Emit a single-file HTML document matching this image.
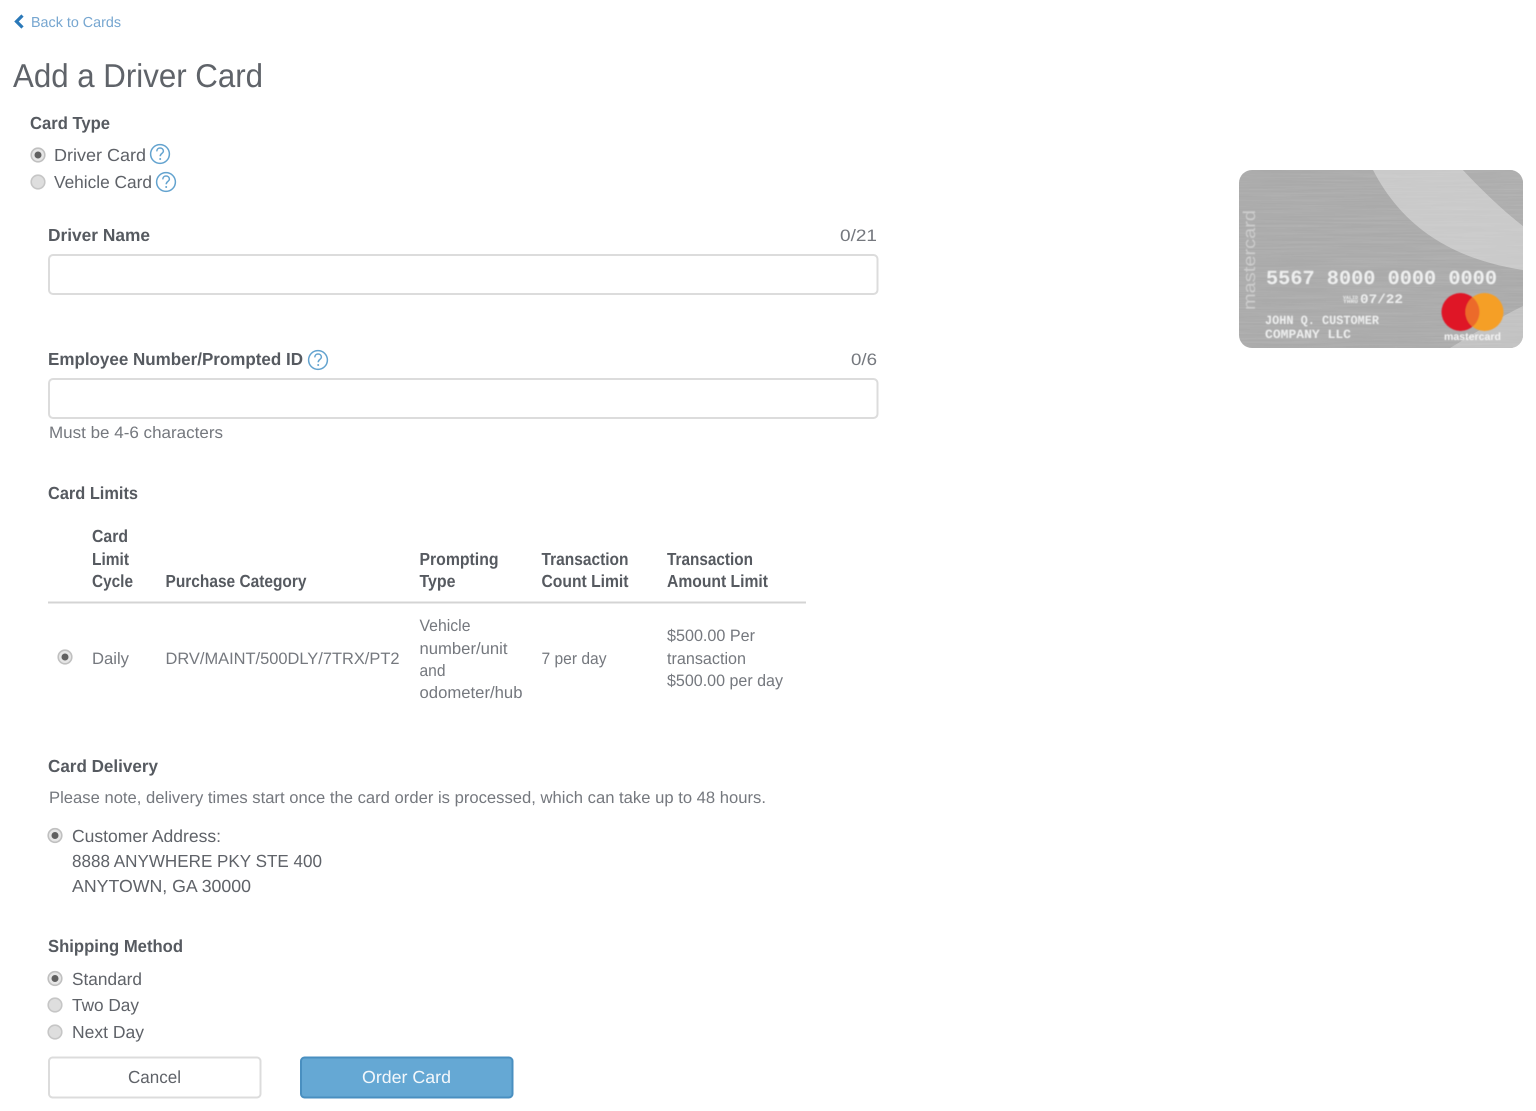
<!DOCTYPE html>
<html lang="en"><head><meta charset="utf-8"><title>Add a Driver Card</title>
<style>
html,body{margin:0;padding:0;background:#fff;width:1536px;height:1111px;overflow:hidden}
svg{display:block;position:absolute;left:0;top:0}
text{font-family:"Liberation Sans",sans-serif}
.b{font-weight:700;font-size:17.5px;fill:#565a60}
.r{font-size:17.5px;fill:#5e6268}
.l{font-size:16.5px;fill:#74787e}
.m{font-family:"Liberation Mono",monospace;font-weight:700;fill:#eeefef}
.box{fill:#fff;stroke:#dcdcdc;stroke-width:2}
</style></head><body>
<svg width="1536" height="1111" viewBox="0 0 1536 1111" xmlns="http://www.w3.org/2000/svg" text-rendering="geometricPrecision">
<defs>
<g id="on"><circle r="6.800" fill="#e6e6e6" stroke="#c0c0c0" stroke-width="1.600"/><circle r="3.500" fill="#606060"/></g>
<g id="off"><circle r="6.800" fill="#dedede" stroke="#c6c6c6" stroke-width="1.600"/></g>
<g id="q"><circle r="9.400" fill="#fff" stroke="#63a3cf" stroke-width="1.500"/><path d="M-3.200-2.600C-3.200-5 -1.500-6 0-6C2-6 3.400-4.700 3.400-2.900C3.400-.6 .2-.4 .2 2.200" fill="none" stroke="#63a3cf" stroke-width="1.500"/><circle cx=".2" cy="5" r="1" fill="#63a3cf"/></g>
<clipPath id="cc"><rect x="1239" y="170" width="284" height="178" rx="13"/></clipPath>
<filter id="brush" x="0" y="0" width="100%" height="100%"><feTurbulence type="fractalNoise" baseFrequency="0.012 0.55" numOctaves="3" seed="4"/><feColorMatrix values="0 0 0 0 1  0 0 0 0 1  0 0 0 0 1  .9 0 0 0 -.28"/></filter>
<filter id="soft" filterUnits="userSpaceOnUse" x="1230" y="160" width="306" height="200"><feGaussianBlur stdDeviation=".5"/></filter>
<filter id="page" filterUnits="userSpaceOnUse" x="0" y="0" width="1536" height="1111"><feGaussianBlur stdDeviation=".3"/></filter>
</defs>

<g filter="url(#page)">
<path d="M22.500 15.500L16.500 21.500L22.500 27.500" fill="none" stroke="#2a78b8" stroke-width="3.200"/>
<text x="31" y="27" font-size="14.500" fill="#76a6d0" textLength="90" lengthAdjust="spacingAndGlyphs">Back to Cards</text>
<text x="13" y="87" font-size="33" fill="#5f6369" textLength="250" lengthAdjust="spacingAndGlyphs">Add a Driver Card</text>

<text class="b" x="30" y="129" textLength="80" lengthAdjust="spacingAndGlyphs">Card Type</text>
<use href="#on" x="38" y="155"/>
<text class="r" x="54" y="161" textLength="92" lengthAdjust="spacingAndGlyphs">Driver Card</text>
<use href="#q" x="160" y="154"/>
<use href="#off" x="38" y="182"/>
<text class="r" x="54" y="188" textLength="98" lengthAdjust="spacingAndGlyphs">Vehicle Card</text>
<use href="#q" x="166" y="182"/>

<text class="b" x="48" y="241" textLength="102" lengthAdjust="spacingAndGlyphs">Driver Name</text>
<text class="l" x="840" y="241" textLength="37" lengthAdjust="spacingAndGlyphs">0/21</text>
<rect class="box" x="49" y="255" width="828.500" height="39" rx="4"/>

<text class="b" x="48" y="365" textLength="255" lengthAdjust="spacingAndGlyphs">Employee Number/Prompted ID</text>
<use href="#q" x="318" y="360"/>
<text class="l" x="851" y="365" textLength="26" lengthAdjust="spacingAndGlyphs">0/6</text>
<rect class="box" x="49" y="379" width="828.500" height="39" rx="4"/>
<text class="l" x="49" y="438" textLength="174" lengthAdjust="spacingAndGlyphs">Must be 4-6 characters</text>

<text class="b" x="48" y="499" textLength="90" lengthAdjust="spacingAndGlyphs">Card Limits</text>
<text class="b" x="92" y="542" textLength="36" lengthAdjust="spacingAndGlyphs">Card</text>
<text class="b" x="92" y="565" textLength="37" lengthAdjust="spacingAndGlyphs">Limit</text>
<text class="b" x="92" y="587" textLength="41" lengthAdjust="spacingAndGlyphs">Cycle</text>
<text class="b" x="165.500" y="587" textLength="141" lengthAdjust="spacingAndGlyphs">Purchase Category</text>
<text class="b" x="419.500" y="565" textLength="79" lengthAdjust="spacingAndGlyphs">Prompting</text>
<text class="b" x="419.500" y="587" textLength="36" lengthAdjust="spacingAndGlyphs">Type</text>
<text class="b" x="541.500" y="565" textLength="87" lengthAdjust="spacingAndGlyphs">Transaction</text>
<text class="b" x="541.500" y="587" textLength="87" lengthAdjust="spacingAndGlyphs">Count Limit</text>
<text class="b" x="667" y="565" textLength="86" lengthAdjust="spacingAndGlyphs">Transaction</text>
<text class="b" x="667" y="587" textLength="101" lengthAdjust="spacingAndGlyphs">Amount Limit</text>
<rect x="48" y="601.500" width="758" height="2" fill="#d4d4d4"/>

<use href="#on" x="65" y="657"/>
<text class="l" x="92" y="664" textLength="37" lengthAdjust="spacingAndGlyphs">Daily</text>
<text class="l" x="165.500" y="664" textLength="234" lengthAdjust="spacingAndGlyphs">DRV/MAINT/500DLY/7TRX/PT2</text>
<text class="l" x="419.500" y="631" textLength="51" lengthAdjust="spacingAndGlyphs">Vehicle</text>
<text class="l" x="419.500" y="654" textLength="88" lengthAdjust="spacingAndGlyphs">number/unit</text>
<text class="l" x="419.500" y="676" textLength="26" lengthAdjust="spacingAndGlyphs">and</text>
<text class="l" x="419.500" y="698" textLength="103" lengthAdjust="spacingAndGlyphs">odometer/hub</text>
<text class="l" x="541.500" y="664" textLength="65" lengthAdjust="spacingAndGlyphs">7 per day</text>
<text class="l" x="667" y="641" textLength="88" lengthAdjust="spacingAndGlyphs">$500.00 Per</text>
<text class="l" x="667" y="664" textLength="79" lengthAdjust="spacingAndGlyphs">transaction</text>
<text class="l" x="667" y="686" textLength="116" lengthAdjust="spacingAndGlyphs">$500.00 per day</text>

<text class="b" x="48" y="772" textLength="110" lengthAdjust="spacingAndGlyphs">Card Delivery</text>
<text class="l" x="49" y="803" textLength="717" lengthAdjust="spacingAndGlyphs">Please note, delivery times start once the card order is processed, which can take up to 48 hours.</text>
<use href="#on" x="55" y="835.500"/>
<text class="r" x="72" y="842" textLength="149" lengthAdjust="spacingAndGlyphs">Customer Address:</text>
<text class="r" x="72" y="867" textLength="250" lengthAdjust="spacingAndGlyphs">8888 ANYWHERE PKY STE 400</text>
<text class="r" x="72" y="892" textLength="179" lengthAdjust="spacingAndGlyphs">ANYTOWN, GA 30000</text>

<text class="b" x="48" y="952" textLength="135" lengthAdjust="spacingAndGlyphs">Shipping Method</text>
<use href="#on" x="55" y="978.500"/>
<text class="r" x="72" y="985" textLength="70" lengthAdjust="spacingAndGlyphs">Standard</text>
<use href="#off" x="55" y="1005"/>
<text class="r" x="72" y="1011" textLength="67" lengthAdjust="spacingAndGlyphs">Two Day</text>
<use href="#off" x="55" y="1032"/>
<text class="r" x="72" y="1038" textLength="72" lengthAdjust="spacingAndGlyphs">Next Day</text>

<rect class="box" x="49" y="1057.500" width="211.500" height="40" rx="3.500"/>
<text class="r" x="128" y="1083" textLength="53" lengthAdjust="spacingAndGlyphs">Cancel</text>
<rect x="301" y="1057.500" width="211.500" height="40" rx="3.500" fill="#65a8d4" stroke="#4a8fc0" stroke-width="2"/>
<text x="362" y="1083" font-size="17.500" fill="#f2f7fb" textLength="89" lengthAdjust="spacingAndGlyphs">Order Card</text>
</g>

<g clip-path="url(#cc)">
<rect x="1239" y="170" width="284" height="178" fill="#aaaaaa"/>
<path d="M1373 170H1463C1480 188 1500 208 1523 226V270C1445 258 1400 222 1373 170Z" fill="#c9c9c9"/>
<path d="M1463 170H1523V226C1500 208 1480 188 1463 170Z" fill="#adadad"/>
<path d="M1450 348C1475 333 1500 317 1523 306V348Z" fill="#c2c2c2"/>
<rect x="1239" y="170" width="284" height="178" filter="url(#brush)" opacity=".2"/>
</g>
<g filter="url(#soft)">
<text class="m" x="1266" y="284" font-size="20" textLength="231" lengthAdjust="spacingAndGlyphs">5567 8000 0000 0000</text>
<text class="m" x="1343" y="299" font-size="5" textLength="15" lengthAdjust="spacingAndGlyphs">VALID</text>
<text class="m" x="1343" y="303" font-size="5" textLength="15" lengthAdjust="spacingAndGlyphs">THRU</text>
<text class="m" x="1360" y="303" font-size="13" textLength="43" lengthAdjust="spacingAndGlyphs">07/22</text>
<text class="m" x="1265" y="324" font-size="12.500" textLength="114" lengthAdjust="spacingAndGlyphs">JOHN Q. CUSTOMER</text>
<text class="m" x="1265" y="338" font-size="12.500" textLength="86" lengthAdjust="spacingAndGlyphs">COMPANY LLC</text>
<text transform="translate(1255 310) rotate(-90)" font-size="17" fill="#cdcdcd" textLength="100" lengthAdjust="spacingAndGlyphs">mastercard</text>
<circle cx="1460.500" cy="312" r="19" fill="#df1428"/>
<circle cx="1484.500" cy="312" r="19" fill="#f59f27"/>
<path d="M1472.500 297.300A19 19 0 0 1 1472.500 326.700A19 19 0 0 1 1472.500 297.300Z" fill="#ec6a2c"/>
<text x="1444" y="340" font-size="10.500" font-weight="700" fill="#f4f4f4" textLength="57" lengthAdjust="spacingAndGlyphs">mastercard</text>
</g>
</svg>
</body></html>
